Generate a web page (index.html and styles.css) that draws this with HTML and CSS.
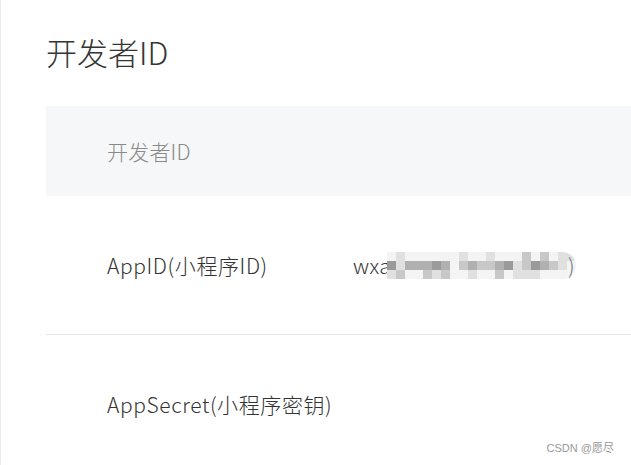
FILE: index.html
```html
<!DOCTYPE html>
<html lang="zh-CN">
  <head>
    <meta charset="UTF-8" />
    <meta name="viewport" content="width=device-width, initial-scale=1.0" />
    <title>开发者ID</title>
    <link rel="stylesheet" href="styles.css">
  </head>
  <body>
    <div class="page">
      <h2 class="title">开发者ID</h2>

      <div class="table">
        <div class="row head">
          <div class="label">开发者ID</div>
        </div>
        <div class="row">
          <div class="label">AppID(小程序ID)</div>
          <div class="value">
            <span>wxa</span>
            <span class="mosaic">
              <i class="c0"></i><i class="c1"></i><i class="c0"></i><i class="c0"></i><i class="c0"></i><i class="c0"></i><i class="c0"></i><i class="c0"></i><i class="c1"></i><i class="c0"></i><i class="c0"></i><i class="c1"></i><i class="c0"></i><i class="c0"></i><i class="c0"></i><i class="c2"></i><i class="c0"></i><i class="c2"></i><i class="c0"></i><i class="c1"></i><i class="c1"></i>
              <i class="c4"></i><i class="c1"></i><i class="c3"></i><i class="c3"></i><i class="c3"></i><i class="c4"></i><i class="c3"></i><i class="c0"></i><i class="c2"></i><i class="c3"></i><i class="c2"></i><i class="c2"></i><i class="c3"></i><i class="c4"></i><i class="c1"></i><i class="c2"></i><i class="c4"></i><i class="c3"></i><i class="c2"></i><i class="c1"></i><i class="c0"></i>
              <i class="c1"></i><i class="c2"></i><i class="c0"></i><i class="c0"></i><i class="c2"></i><i class="c1"></i><i class="c2"></i><i class="c0"></i><i class="c0"></i><i class="c1"></i><i class="c0"></i><i class="c0"></i><i class="c2"></i><i class="c0"></i><i class="c1"></i><i class="c1"></i><i class="c1"></i><i class="c0"></i><i class="c0"></i><i class="c0"></i><i class="c0"></i>
            </span>
            <span class="tail">)</span>
          </div>
        </div>
        <div class="row">
          <div class="label">AppSecret(小程序密钥)</div>
        </div>
      </div>
    </div>
    <div class="watermark">CSDN @愿尽</div>
  </body>
</html>
```

FILE: styles.css
```css
body,
html {
  margin: 0;
  padding: 0;
  background: #fff;
  font-family: "Microsoft YaHei", "Noto Sans CJK SC", sans-serif;
  font-weight: 300;
  color: #333;
}

.page {
  height: 465px;
  box-sizing: border-box;
  border-left: 1px solid #ebebeb;
  padding-left: 45px;
  overflow: hidden;
}

.title {
  margin: 0;
  padding-top: 33px;
  height: 106px;
  box-sizing: border-box;
  font-size: 31px;
  font-weight: 300;
  line-height: 38px;
  color: #353535;
}

/* table */
.row {
  display: flex;
  align-items: center;
  padding-left: 61px;
  height: 138px;
  border-bottom: 1px solid #e7e7e7;
  font-size: 21px;
  letter-spacing: 0.6px;
}

.row.head {
  height: 90px;
  background: #f6f7f9;
  border-bottom: none;
  color: #8a8a8a;
  letter-spacing: 0.2px;
}

.row:last-child {
  border-bottom: none;
}

.label {
  width: 246px;
}

.value {
  display: flex;
  align-items: center;
  letter-spacing: 0.3px;
}

.mosaic {
  display: grid;
  grid-template-columns: repeat(21, 9px);
  grid-auto-rows: 9px;
  margin-left: -4px;
  border-radius: 0 14px 14px 0;
  overflow: hidden;
}

.mosaic i {
  display: block;
}

.c0 { background: #f4f4f4; }
.c1 { background: #e0e0e0; }
.c2 { background: #c8c8c8; }
.c3 { background: #b0b0b0; }
.c4 { background: #9a9a9a; }

.tail {
  margin-left: -8px;
  color: #777;
}

.watermark {
  position: absolute;
  right: 17px;
  bottom: 10px;
  font-family: "Liberation Sans", "Noto Sans CJK SC", sans-serif;
  font-size: 11px;
  font-weight: normal;
  color: #999;
}
```
